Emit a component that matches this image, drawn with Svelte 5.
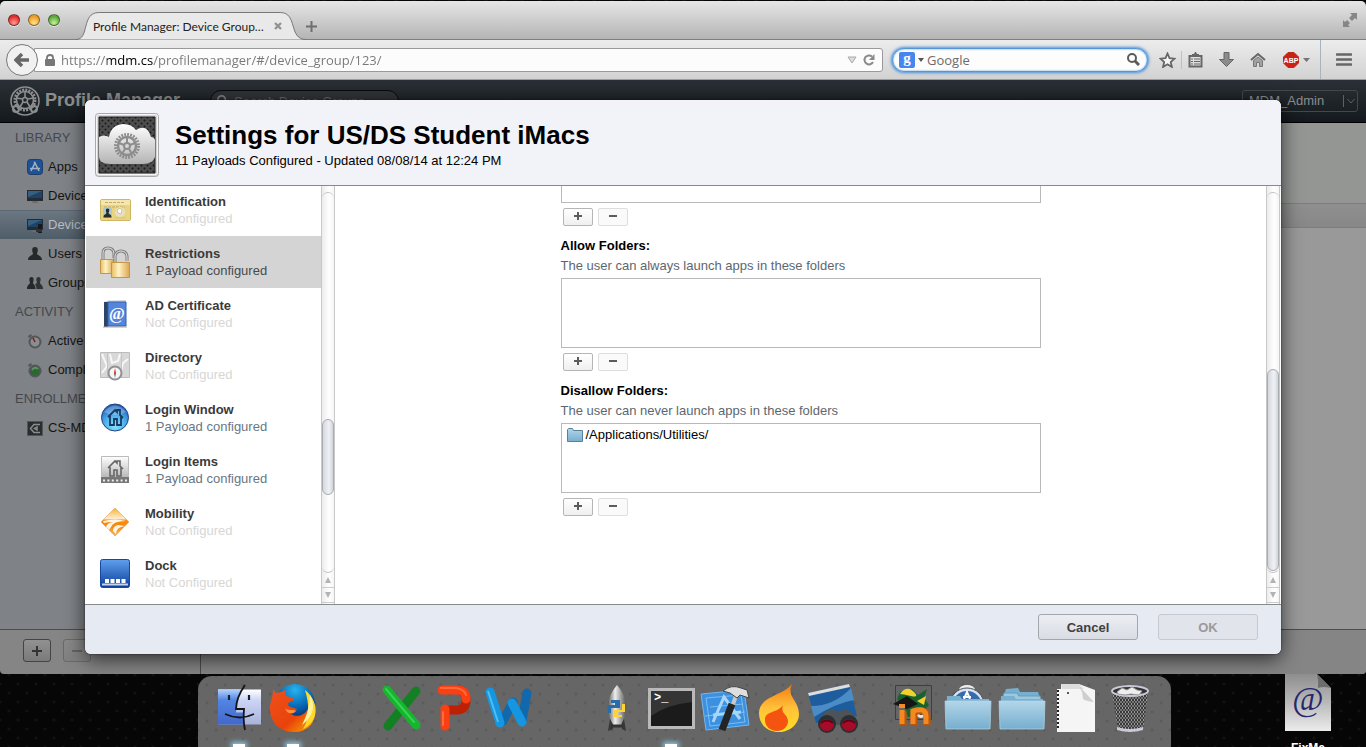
<script>
  const library = [
    { icon: "apps", label: "Apps" },
    { icon: "device", label: "Devices" },
    { icon: "deviceGroup", label: "Device Groups", active: true },
    { icon: "user", label: "Users" },
    { icon: "group", label: "Groups" },
  ];

  const sections = [
    { title: "LIBRARY", items: library },
    {
      title: "ACTIVITY",
      items: [
        { icon: "clock", label: "Active Tasks" },
        { icon: "done", label: "Completed" },
      ],
    },
    { title: "ENROLLMENT", items: [{ icon: "enroll", label: "CS-MDM" }] },
  ];

  const payloads = [
    { icon: "idcard", name: "Identification", count: 0 },
    { icon: "locks", name: "Restrictions", count: 1 },
    { icon: "book", name: "AD Certificate", count: 0 },
    { icon: "map", name: "Directory", count: 0 },
    { icon: "loginWindow", name: "Login Window", count: 1 },
    { icon: "loginItems", name: "Login Items", count: 1 },
    { icon: "mobility", name: "Mobility", count: 0 },
    { icon: "dock", name: "Dock", count: 0 },
  ];

  const folderLists = [
    {
      title: "Allow Folders:",
      hint: "The user can always launch apps in these folders",
      folders: [],
    },
    {
      title: "Disallow Folders:",
      hint: "The user can never launch apps in these folders",
      folders: ["/Applications/Utilities/"],
    },
  ];

  const dockItems = [
    { name: "Finder", running: true },
    { name: "Firefox", running: true },
    { name: "" },
    { name: "Excel" },
    { name: "PowerPoint" },
    { name: "Word" },
    { name: "" },
    { name: "Rocket" },
    { name: "Terminal", running: true },
    { name: "Xcode" },
    { name: "Flame" },
    { name: "Remote Desktop" },
    { name: "divider" },
    { name: "Munki" },
    { name: "Applications" },
    { name: "Folder" },
    { name: "Documents" },
    { name: "Trash" },
  ];

  let selected = $state("Restrictions");
  let url = $state("https://mdm.cs/profilemanager/#/device_group/123/");
</script>

<!-- shared gradients for all icons -->
<svg class="defs" aria-hidden="true">
  <defs>
    <linearGradient id="blue" x2="0" y2="1"><stop stop-color="#5fa0ee" /><stop offset="1" stop-color="#0c3f9c" /></linearGradient>
    <linearGradient id="gold" x2="1" y2="0"><stop stop-color="#e8bd62" /><stop offset=".4" stop-color="#fff3c4" /><stop offset="1" stop-color="#dda550" /></linearGradient>
    <linearGradient id="silver" x2="0" y2="1"><stop stop-color="#fff" /><stop offset="1" stop-color="#b4b4b4" /></linearGradient>
    <linearGradient id="page" x2="0" y2="1"><stop stop-color="#8e8e8e" /><stop offset=".5" stop-color="#b9b9b9" /><stop offset="1" stop-color="#ececec" /></linearGradient>
    <linearGradient id="folder" x2="0" y2="1"><stop stop-color="#b3d5e8" /><stop offset="1" stop-color="#76aecf" /></linearGradient>
    <linearGradient id="orange" x2="0" y2="1"><stop stop-color="#fbb12c" /><stop offset=".4" stop-color="#fff1d8" /><stop offset=".42" stop-color="#f78a0c" /><stop offset=".65" stop-color="#f78a0c" /><stop offset="1" stop-color="#fab765" /></linearGradient>
    <linearGradient id="finderL" x2="0" y2="1"><stop stop-color="#b4d3fa" /><stop offset=".3" stop-color="#5485e2" /><stop offset="1" stop-color="#4268cb" /></linearGradient>
    <linearGradient id="finderR" x2="0" y2="1"><stop stop-color="#fff" /><stop offset=".3" stop-color="#cdd5f6" /><stop offset="1" stop-color="#a9b2da" /></linearGradient>
    <linearGradient id="flame" x2="0" y2="1"><stop stop-color="#f77a10" /><stop offset=".5" stop-color="#ffc13b" /><stop offset="1" stop-color="#ffdf24" /></linearGradient>
    <linearGradient id="fox" x2="1" y2="1"><stop stop-color="#f0501c" /><stop offset=".6" stop-color="#e8430b" /><stop offset="1" stop-color="#ffb400" /></linearGradient>
    <linearGradient id="rocket"><stop stop-color="#555" /><stop offset=".4" stop-color="#eee" /><stop offset="1" stop-color="#555" /></linearGradient>
    <radialGradient id="globe" cy=".15" r=".8"><stop stop-color="#27b3ef" /><stop offset=".5" stop-color="#086cb8" /><stop offset="1" stop-color="#0a1d5c" /></radialGradient>
    <radialGradient id="home" cy=".8" r=".85"><stop stop-color="#8ae6fc" /><stop offset=".5" stop-color="#48a8e8" /><stop offset="1" stop-color="#1848a8" /></radialGradient>
    <pattern id="mesh" width="3" height="4" patternUnits="userSpaceOnUse"><rect width="3" height="4" fill="#a0a0a0" /><path d="M0 0l3 4M3 0L0 4" stroke="#2a2a2a" /></pattern>
    <pattern id="holes" width="6" height="6" patternUnits="userSpaceOnUse"><rect width="6" height="6" fill="#4c4c4c" /><circle cx="1.5" cy="1.5" r="1" fill="#191919" /><circle cx="4.5" cy="4.5" r="1" fill="#191919" /></pattern>
  </defs>
</svg>

{#snippet sideIcon(name)}
  <svg class="side-icon" viewBox="0 0 16 16" aria-hidden="true">
    {#if name === "apps"}
      <rect x=".5" y=".5" width="15" height="15" rx="3" fill="#1d5296" stroke="#203e66" />
      <path d="M4 12L8 4l4 8M3 9.500h10M7 4l1-1" fill="none" stroke="#a6b1bf" stroke-width="1.500" />
    {:else if name === "device" || name === "deviceGroup"}
      <rect y="2" width="16" height="11" fill="#262b30" />
      <path d="M1 3h14v7H1z" fill="#1d4468" />
      <path d="M1 3h14L1 9z" fill="#375f82" />
      <path d="M6 13h4l1 2H5z" fill="#686c70" />
      {#if name === "deviceGroup"}
        <path d="M11 7h4v9h-4z" fill="#171a1d" /><path d="M9 12h6v3H9z" fill="#2e3236" />
      {/if}
    {:else if name === "user"}
      <path d="M8 1c3 0 3.500 3 2 6.500 0 2 5 2 5 6.500H1c0-4.500 5-4.500 5-6.500C4.500 4 5 1 8 1z" fill="#262829" />
    {:else if name === "group"}
      <path d="M4.500 2C7 2 7 5 6 7.500c0 2 2.500 2 2.500 6.500H0c0-4.500 3-4.500 3-6.500C2 5 2 2 4.500 2z" fill="#262829" />
      <path d="M11.500 2C14 2 14 5 13 7.500c0 2 3 2 3 6.500H9.500c0-4-2-4-1-5s1.500-1 1.500-1.500C9 5 9 2 11.500 2z" fill="#303233" />
    {:else if name === "clock" || name === "done"}
      <circle cx="8" cy="9" r="5.500" fill={name === "done" ? "#2d6630" : "#8a8c8e"} stroke="#53575b" stroke-width="2" />
      <path d="M1 3l3-2 1 2-3 2z" fill="#53575b" />
      {#if name === "clock"}
        <path d="M8 9L6 5" stroke="#7b2020" stroke-width="1.500" />
      {:else}
        <path d="M5 8q3-4 6-1" fill="none" stroke="#5f9464" stroke-width="2" />
      {/if}
    {:else}
      <rect x=".5" y="1.500" width="15" height="14" fill="#2a2c2d" stroke="#535657" />
      <path d="M13 4.500H7L3.500 8.500 7 12.500h6M7.500 8.500L10 7v3z" fill="none" stroke="#8b8d8e" stroke-width="1.500" />
    {/if}
  </svg>
{/snippet}

{#snippet payloadIcon(name)}
  <svg class="payload-icon" viewBox="0 0 30 30" aria-hidden="true">
    {#if name === "idcard"}
      <rect x=".5" y="4.500" width="30" height="21" rx="1.500" fill="#e9d480" stroke="#cdb765" />
      <path d="M1 5h29v5H1z" fill="#f3e7af" /><path d="M5 7.500h20M4 12h21" stroke="#c7a86d" stroke-dasharray="3 1" />
      <path d="M3 13h9v10H3z" fill="#a8cbd7" /><path d="M7.500 13.500c3 0 1.500 3 1 4.500 1 2 3 1 3 4.500H3.500c0-3.500 2-2.500 3-4.500-.5-1.500-1.500-4.500 1-4.500z" fill="#302a20" />
      <circle cx="20" cy="17" r="5" fill="#e4e0cc" /><path d="M17 15l3-2 2 2-1 4-3-1zM14 23h12" fill="#fff" stroke="#d9c279" />
    {:else if name === "locks"}
      <path d="M3 13V6q0-5 5-5t6 5v5" fill="none" stroke="#7d7d7d" stroke-width="3" />
      <path d="M3 13V6q0-5 5-5t6 5v5" fill="none" stroke="#e6e6e6" />
      <path d="M.5 12.500h13v14H.5z" fill="url(#gold)" stroke="#c0954c" />
      <path d="M15 16V9q1-5 6-5t6 5v5" fill="none" stroke="#7d7d7d" stroke-width="3" />
      <path d="M15 16V9q1-5 6-5t6 5v5" fill="none" stroke="#e6e6e6" />
      <path d="M11.500 15.500h18v15h-18z" fill="url(#gold)" stroke="#c0954c" />
    {:else if name === "book"}
      <path d="M4 3l4-1.500 18-.5v26l-4 1H4z" fill="#ced4d9" />
      <path d="M4 3h4v25H4z" fill="#2b4468" /><path d="M8 3h18v24H8z" fill="#5585dc" stroke="#3560ad" />
      <path d="M3 28h24" stroke="#aaa" />
      <text x="17" y="20" class="at-small">@</text>
    {:else if name === "map"}
      <path d="M.5 1.500h29v25H.5z" fill="#d7d7d7" stroke="#bcbcbc" />
      <path d="M2 3l5 12-5 7M10 3l2 9 6-2 2-7M20 24l3-12 5-4" fill="none" stroke="#f7f7f7" stroke-width="2" />
      <path d="M7.500 2v24M21.500 2v24" stroke="#c4c4c4" />
      <circle cx="15" cy="22" r="6.500" fill="#f6f6f6" stroke="#8e9296" stroke-width="2" /><path d="M14 22l1-5 1 5z" fill="#e13424" /><path d="M14 22l1 5 1-5z" fill="#53626f" />
    {:else if name === "loginWindow"}
      <circle cx="15" cy="14.500" r="13.500" fill="url(#home)" stroke="#214284" />
      <path d="M4 9Q15-4 26 9 15 15 4 9z" fill="#fff" opacity=".25" />
      <path d="M8 14l7-7 2 2V7h3v5l3 3M10 13v9h4v-6h3v6h4v-9" fill="none" stroke="#173b65" stroke-width="1.800" />
    {:else if name === "loginItems"}
      <path d="M1.500 1.500h27v22h-27z" fill="url(#silver)" stroke="#bbb" /><path d="M1 22h28v6H1z" fill="#777" />
      <path d="M3 25.500h24" stroke="#eee" stroke-width="2" stroke-dasharray="2 2.400" />
      <path d="M8 13l7-7 2 2V6h3v5l3 3M10 12v9h4v-6h3v6h4v-9" fill="none" stroke="#666" stroke-width="1.600" />
    {:else if name === "mobility"}
      <path d="M15 1l14 14-14 14L1 15z" fill="url(#orange)" stroke="#dfaa68" stroke-width=".7" />
      <path d="M3 14q12-3 23 0-13 0-15 6l-2 3-3-3q1-4 7-5-6 0-9 1zM25 19q-9 1-9 8l-3-3q0-5 5-6z" fill="#fff" opacity=".9" />
    {:else}
      <rect x=".5" y=".5" width="29" height="28" rx="2" fill="url(#blue)" stroke="#1846a0" />
      <path d="M5 20h4v4H5zm5.500 0h4v4h-4zm5.500 0h4v4h-4zm5.500 0h4v4h-4z" fill="#fff" /><path d="M2 25.500h26" stroke="#c4d5f4" stroke-width="2" />
    {/if}
  </svg>
{/snippet}

{#snippet dockIcon(name)}
  <svg viewBox="0 0 48 48" aria-hidden="true">
    {#if name === "Finder"}
      <path d="M3 5.500h43v35H3z" fill="url(#finderR)" /><path d="M3 5.500h24q-5 11-6 23h7l1 12H3z" fill="url(#finderL)" />
      <path d="M14 11v5M34 11v5" stroke="#15213c" stroke-width="2.200" />
      <path d="M30 1q-9 13-9 24h8q-1 12 1 21M10 30q15 7 29 0" fill="none" stroke="#151515" stroke-width="1.800" />
    {:else if name === "Firefox"}
      <circle cx="26" cy="20" r="20" fill="url(#globe)" />
      <path d="M36 6c16 13 14 42-11 42C9 48 0 36 1 22c1-6 3-9 3-17l3 4c4-1 6-1 9-3l1 6c3 1 6 0 8 4-3 2-5 1-6 4 1 4 5 3 9 5-1 3-5 4-7 4 6 6 17 2 19-7 1-6-1-11-4-16z" fill="url(#fox)" />
      <path d="M36 6c15 12 14 32-2 39 6-9 7-23 2-39z" fill="#ffd82b" />
      <path d="M41 11c7 13 1 23-8 30 4-8 7-15 8-30z" fill="#fff2a0" />
      <path d="M16 24c3 3 8 1 11 3-2 3-6 3-9 1z" fill="#ff8f3d" />
    {:else if name === "Excel"}
      <path d="M39 7L11 42" stroke="#138024" stroke-width="9" stroke-linecap="round" /><path d="M10 6l29 35" stroke="#15b530" stroke-width="9" stroke-linecap="round" /><path d="M9 5l28 33" stroke="#38d44d" stroke-width="2" stroke-linecap="round" />
    {:else if name === "PowerPoint"}
      <path d="M13 26h14q8-1 8-10t-8-10" fill="none" stroke="#bd2004" stroke-width="9" stroke-linejoin="round" /><path d="M11 6h15q9 0 9 9M14 42V25" fill="none" stroke="#fa4012" stroke-width="9" stroke-linecap="round" /><path d="M10 4h15q8 1 10 7M12 28v13" fill="none" stroke="#ff6a3c" stroke-width="2" stroke-linecap="round" />
    {:else if name === "Word"}
      <path d="M18 37L28 18M37 37L42 9" stroke="#1268ac" stroke-width="9" stroke-linecap="round" /><path d="M5 8l10 31M27 19l10 19" stroke="#1596e0" stroke-width="9" stroke-linecap="round" /><path d="M3 7l10 31" stroke="#51bcf2" stroke-width="2" />
    {:else if name === "Rocket"}
      <path d="M17 35l-2 12 5-2v-7h9v7l4 2-2-12z" fill="#373737" /><path d="M24 1q17 20 3 41h-6Q7 21 24 1z" fill="url(#rocket)" /><path d="M18 42h12" stroke="#333" stroke-width="3" />
      <path d="M18 16h9v8h-9v5h-3v-8h7v-2h-4z" fill="#286daa" /><path d="M29 20h3v8h-7v3h4v2h-9v-7h9z" fill="#ffd335" />
    {:else if name === "Terminal"}
      <path d="M2.500 5.500h44v38h-44z" fill="#1b1b1b" stroke="#b9b9b9" stroke-width="3" /><path d="M4 32Q22 20 45 18V7H4z" fill="#353535" /><text x="7" y="17" class="prompt">&gt;_</text>
    {:else if name === "Xcode"}
      <path d="M0 10l43-4 5 35-43 5z" fill="#3b91e0" stroke="#73b7ee" /><path d="M5 14l35-3 4 27-35 4zM4 32l40-4M9 23l33-3" fill="none" stroke="#8fc7f1" stroke-width=".8" />
      <path d="M12 38l11-25 16 22M12 31l28-3" fill="none" stroke="#a7d6f8" stroke-width="3" /><path d="M36 9L31 23" stroke="#c8c8c8" stroke-width="4" /><path d="M31 20L21 46" stroke="#242424" stroke-width="7" /><path d="M22 7q8-7 18-3l6 2 2 8-9-3-3 3-7-5z" fill="#dedede" stroke="#444" />
    {:else if name === "Flame"}
      <path d="M37 0c-6 13 7 16 7 30 0 10-9 18-20 18S4 41 4 29C4 12 28 12 37 0z" fill="url(#flame)" /><path d="M28 21c-3 9 5 9 5 16 0 6-5 10-11 10S10 43 10 36c0-10 12-6 18-15z" fill="#f55410" />
    {:else if name === "Remote Desktop"}
      <path d="M-1 9L40 0l8 32-41 7z" fill="#1e5d9d" /><path d="M-1 9L40 0l1 3L0 12z" fill="#ddd" /><path d="M2 22Q25 22 42 4l3 12Q27 19 5 33z" fill="#4b8cc7" />
      <path d="M15 28l8-3 6 3 7-3 8 4 5 12H10z" fill="#4d5357" /><circle cx="18" cy="40" r="9" fill="#2b2f31" /><circle cx="40" cy="40" r="9" fill="#2b2f31" /><ellipse cx="18" cy="41" rx="7" ry="6" fill="#a80b27" /><ellipse cx="40" cy="41" rx="7" ry="6" fill="#a80b27" /><path d="M12 39q6-5 12 0M34 39q6-5 12 0" fill="none" stroke="#5a0617" stroke-width="2" />
    {:else if name === "Munki"}
      <path d="M5.500 1.500h36v34h-36z" fill="#656565" stroke="#7c2424" /><path d="M10 8l12-3 6 6 9-6-3 9 5 7-9 10-12 2-4-11-7-7z" fill="#18622c" /><path d="M10 10q7-10 15-1 4 5-4 3t-11-2M27 17l9-5-2 9z" fill="#f1d12a" /><path d="M3 20l14-8 11 8-11 5z" fill="#161616" /><circle cx="31" cy="29" r="5" fill="#e6e6e6" /><circle cx="31" cy="29" r="2" fill="#222" />
      <path d="M13 27v14M24 41V28q13-4 13 5v8" fill="none" stroke="#c15405" stroke-width="7" /><path d="M12 26v14M23 40V27q13-4 13 5v8" fill="none" stroke="#f38a21" stroke-width="5" /><path d="M9 20h6v4H9z" fill="#f38a21" />
    {:else if name === "Applications" || name === "Folder"}
      {#if name === "Applications"}
        <ellipse cx="23" cy="6" rx="8" ry="5" fill="#eee" /><circle cx="23" cy="21" r="17" fill="#dae3ef" stroke="#49525c" /><circle cx="23" cy="22" r="15" fill="#356dac" /><path d="M20 15l3-7 3 7M19 13h8" fill="none" stroke="#fff" stroke-width="2" />
      {:else}
        <path d="M8 5l12-1 2 4h18l3 9H4z" fill="#76afd0" /><path d="M6 9h13l2 3h21l2 7H3z" fill="#9ac8df" stroke="#649dbd" />
      {/if}
      <path d="M3 12h13l2 3h27v29H2z" fill="#78b0cf" /><path d="M1 17h46l-1 28H2z" fill="url(#folder)" stroke="#b5d9ea" stroke-width=".7" />
    {:else if name === "Documents"}
      <path d="M9 0h18l16 6v42H5V5h4z" fill="#f5f5f5" /><path d="M9 0h18l5 5H10z" fill="#ddd" /><path d="M27 2l15 16q-9-1-11-3l-1-7z" fill="#cfcfcf" /><path d="M6 6v40" stroke="#222" stroke-width="2" stroke-dasharray="2 2" /><circle cx="16" cy="9" r="1" fill="#222" />
    {:else}
      <path d="M6 8h36l-5 38q-13 4-25 0z" fill="url(#mesh)" /><path d="M11 43q13 4 26 0v3q-13 4-26 0z" fill="#c9c9da" /><ellipse cx="24" cy="7" rx="18" ry="5" fill="#333" stroke="#c9c9d8" stroke-width="2" /><path d="M11 8l5-4 5 2 5-3 5 3 5 1-3 4-8-1-6 1-7-1z" fill="#eee" stroke="#999" />
    {/if}
  </svg>
{/snippet}

{#snippet scrollbar(before, thumb, after)}
  <div class="scrollbar">
    <div class="track">
      <div style="flex-grow: {before}"></div>
      <div class="thumb" style="flex-grow: {thumb}"></div>
      <div style="flex-grow: {after}"></div>
    </div>
    <button aria-label="Scroll up"><svg viewBox="0 0 8 8"><path d="M4 1l3 6H1z" /></svg></button>
    <button aria-label="Scroll down"><svg viewBox="0 0 8 8"><path d="M4 7l3-6H1z" /></svg></button>
  </div>
{/snippet}

{#snippet plusMinus()}
  <div class="plus-minus">
    <button aria-label="Add folder"><svg viewBox="0 0 10 10"><path d="M5 1v8M1 5h8" /></svg></button>
    <button aria-label="Remove folder" disabled><svg viewBox="0 0 10 10"><path d="M1 5h8" /></svg></button>
  </div>
{/snippet}

<div class="desktop">
  <div class="browser">
    <header class="tabstrip">
      <div class="lights">
        <button class="red" aria-label="Close window"></button>
        <button class="yellow" aria-label="Minimize window"></button>
        <button class="green" aria-label="Zoom window"></button>
      </div>
      <div class="tab">
        <svg class="tab-shape" viewBox="0 0 232 28" preserveAspectRatio="none" aria-hidden="true">
          <path d="M0 27.500C14 27.500 5 .5 23 .5H206C224 .5 214 27.500 232 27.500" />
        </svg>
        <span>Profile Manager: Device Group…</span>
        <button aria-label="Close tab"><svg width="10" height="10" viewBox="0 0 10 10"><path d="M2 2l6 6M8 2L2 8" stroke="#929292" stroke-width="2.400" /></svg></button>
      </div>
      <button class="new-tab" aria-label="New tab"><svg width="11" height="11" viewBox="0 0 11 11"><path d="M5.500 0v11M0 5.500h11" stroke="#6f6f6f" stroke-width="2" /></svg></button>
      <button class="fullscreen" aria-label="Full screen"><svg width="16" height="16" viewBox="0 0 16 16"><path d="M8 1h7v7l-2-2-3 3-3-3 3-3zM1 8l2 2 2-2 3 3-2 2 2 2H1z" fill="#868686" /></svg></button>
    </header>

    <nav class="navbar">
      <button class="back" aria-label="Back"><svg width="16" height="14" viewBox="0 0 16 14"><path d="M8 1L2 7l6 6M2 7h13" fill="none" stroke="#676767" stroke-width="3.500" /></svg></button>
      <div class="urlbar">
        <svg width="10" height="12" viewBox="0 0 10 12" aria-hidden="true"><path d="M2 6V3.500Q2 1 5 1t3 2.500V6" fill="none" stroke="#777" stroke-width="1.800" /><rect y="5" width="10" height="7" rx="1" fill="#777" /></svg>
        <input type="text" aria-label="Address" bind:value={url} />
        <button aria-label="History"><svg width="10" height="8" viewBox="0 0 10 8"><path d="M1 1h8L5 7z" fill="#ddd" stroke="#aaa" /></svg></button>
        <button aria-label="Reload"><svg width="12" height="12" viewBox="0 0 12 12"><path d="M9 2.500A4.500 4.500 0 1 0 10 8" fill="none" stroke="#8a8a8a" stroke-width="2" /><path d="M11.500 0v6H6z" fill="#8a8a8a" /></svg></button>
      </div>
      <div class="search">
        <span class="g">g</span>
        <svg width="6" height="4" viewBox="0 0 6 4" aria-hidden="true"><path d="M0 0h6L3 4z" fill="#555" /></svg>
        <input type="search" aria-label="Web search" placeholder="Google" />
        <svg width="13" height="13" viewBox="0 0 13 13" aria-hidden="true"><circle cx="5" cy="5" r="4" fill="none" stroke="#5b5b5b" stroke-width="2" /><path d="M8 8l4 4" stroke="#5b5b5b" stroke-width="3" /></svg>
      </div>
      <button class="tool star" aria-label="Bookmark"><svg width="17" height="16" viewBox="0 0 17 16"><path d="M8.500 1.500l2 4.700 5 .5-3.800 3.300 1.200 5-4.400-2.700L4 15l1.200-5-3.700-3.300 5-.5z" fill="#f5f5f5" stroke="#666" stroke-width="1.800" /></svg></button>
      <button class="tool clip" aria-label="Bookmarks menu"><svg width="15" height="16" viewBox="0 0 15 16"><path d="M1.500 4h12v10.500h-12z" fill="none" stroke="#666" stroke-width="2" /><path d="M4 4V2h2l1-2h1l1 2h2v2z" fill="#666" /><path d="M3 7h2m1 0h6M3 9.500h2m1 0h6M3 12h2m1 0h6" stroke="#666" stroke-width="1.200" /></svg></button>
      <button class="tool down" aria-label="Downloads"><svg width="15" height="15" viewBox="0 0 15 15"><path d="M5 .5h5v7h4.500L7.500 14.500.5 7.500H5z" fill="#8b8b8b" stroke="#656565" /></svg></button>
      <button class="tool home" aria-label="Home"><svg width="16" height="15" viewBox="0 0 16 15"><path d="M1 8l7-6 7 6" fill="none" stroke="#666" stroke-width="2" /><path d="M3.500 8.500L8 5l4.500 3.500v6h-3v-4h-3v4h-3z" fill="#a2a2a2" stroke="#777" /></svg></button>
      <button class="tool abp" aria-label="Adblock Plus">
        <svg width="16" height="16" viewBox="0 0 16 16"><path d="M5 .5h6L15.500 5v6L11 15.500H5L.5 11V5z" fill="#cf2014" stroke="#b32c1f" /><text x="8" y="11">ABP</text></svg>
        <svg width="7" height="4" viewBox="0 0 7 4"><path d="M0 0h7L3.500 4z" fill="#747474" /></svg>
      </button>
      <button class="tool menu" aria-label="Menu"><svg width="16" height="13" viewBox="0 0 16 13"><path d="M1 1.500h14M1 6.500h14M1 11.500h14" stroke="#666" stroke-width="2.600" stroke-linecap="round" /></svg></button>
    </nav>

    <div class="app">
      <header class="topbar">
        <svg width="32" height="32" viewBox="0 0 32 32" aria-hidden="true">
          <g fill="none" stroke="#8b8d8e">
            <circle cx="16" cy="16" r="14" stroke-width="1.600" />
            <circle cx="16" cy="15" r="10" stroke-width="3" stroke-dasharray="2 1.140" />
            <circle cx="16" cy="15" r="8.500" stroke-width="1.600" />
            <circle cx="16" cy="15" r="2.500" stroke-width="1.500" />
            <path d="M16 7v5M8 13l5 1M24 13l-5 1M11 22l3-5M21 22l-3-5" stroke-width="1.600" />
            <circle cx="7" cy="24" r="3" stroke-width="2" /><circle cx="25" cy="24" r="3" stroke-width="2" />
          </g>
        </svg>
        <h1>Profile Manager</h1>
        <label class="app-search">
          <svg width="12" height="12" viewBox="0 0 13 13" aria-hidden="true"><circle cx="5" cy="5" r="4" fill="none" stroke="#7b7d7e" stroke-width="2" /><path d="M8 8l4 4" stroke="#7b7d7e" stroke-width="2" /></svg>
          <input type="search" aria-label="Search Device Groups" placeholder="Search Device Groups" />
        </label>
        <button class="account">
          <span>MDM_Admin</span>
          <svg width="14" height="12" viewBox="0 0 14 12" aria-hidden="true"><path d="M.5 0v12M4.500 4L8 8l3.500-4" fill="none" stroke="#5e6264" /></svg>
        </button>
      </header>

      <div class="workspace">
        <aside>
          <div class="sections">
            {#each sections as section}
              <h2>{section.title}</h2>
              {#each section.items as item}
                <a href="#{item.icon}" class:active={item.active}>
                  {@render sideIcon(item.icon)}
                  {item.label}
                </a>
              {/each}
            {/each}
          </div>
          <div class="side-footer">
            <button aria-label="Add group"><svg width="12" height="12" viewBox="0 0 12 12"><path d="M6 1v10M1 6h10" /></svg></button>
            <button aria-label="Remove group" disabled><svg width="12" height="12" viewBox="0 0 12 12"><path d="M1 6h10" /></svg></button>
          </div>
        </aside>
        <main>
          <div class="summary"></div>
          <div class="columns"></div>
          <div class="rows"></div>
          <div class="main-footer"></div>
        </main>
      </div>

      <div class="modal" role="dialog" aria-labelledby="settings-title">
        <header>
          <svg width="64" height="64" viewBox="0 0 64 64" aria-hidden="true">
            <rect x=".5" y=".5" width="63" height="63" rx="3" fill="#d5d5d5" stroke="#aaa" />
            <rect x="1.500" y="1.500" width="61" height="60" rx="2" fill="none" stroke="#f6f6f6" />
            <path d="M4 4h56v56H4z" fill="url(#holes)" stroke="#222" />
            <path d="M4 24q5-3 10 0 2-12 14-13 9 0 13 6 11-7 15 7 3 0 4 3v17q-2 7-12 7H15Q4 51 4 44z" fill="url(#silver)" />
            <circle cx="32" cy="33" r="11.500" fill="none" stroke="#8d8d8d" stroke-width="3" stroke-dasharray="1.800 1.200" />
            <circle cx="32" cy="33" r="9" fill="none" stroke="#8d8d8d" stroke-width="2.500" />
            <circle cx="32" cy="33" r="3" fill="none" stroke="#8d8d8d" stroke-width="2" />
            <path d="M32 24v6M24 30l5 2M40 30l-5 2M27 41l3-5M37 41l-3-5" stroke="#8d8d8d" stroke-width="2" />
          </svg>
          <div>
            <h2 id="settings-title">Settings for US/DS Student iMacs</h2>
            <p>11 Payloads Configured - Updated 08/08/14 at 12:24 PM</p>
          </div>
        </header>

        <div class="modal-body">
          <div class="payloads">
            {#each payloads as payload}
              <button
                class="payload"
                class:selected={selected === payload.name}
                onclick={() => (selected = payload.name)}
              >
                {@render payloadIcon(payload.icon)}
                <span class="payload-text">
                  <strong>{payload.name}</strong>
                  {#if payload.count > 0}
                    <span class="count">{payload.count} Payload configured</span>
                  {:else}
                    <span class="none">Not Configured</span>
                  {/if}
                </span>
              </button>
            {/each}
          </div>
          {@render scrollbar(228, 75, 78)}

          <div class="form">
            <div class="fields">
              <div class="box clipped"></div>
              {@render plusMinus()}
              {#each folderLists as list}
                <h3>{list.title}</h3>
                <p>{list.hint}</p>
                <ul class="box">
                  {#each list.folders as folder}
                    <li>
                      <svg width="16" height="15" viewBox="0 0 16 15" aria-hidden="true"><path d="M.5 3V1.500l1-1h4l1 2h9v11H.5z" fill="url(#folder)" stroke="#5a8199" /></svg>
                      {folder}
                    </li>
                  {/each}
                </ul>
                {@render plusMinus()}
              {/each}
            </div>
          </div>
          {@render scrollbar(178, 202, 1)}
        </div>

        <footer>
          <button>Cancel</button>
          <button disabled>OK</button>
        </footer>
      </div>
    </div>
  </div>

  <div class="shelf">
    <div class="dock">
      {#each dockItems as item}
        {#if item.name === "divider"}
          <div class="dock-divider"></div>
        {:else if item.name === ""}
          <div class="dock-item"></div>
        {:else}
          <button class="dock-item" class:running={item.running} aria-label={item.name}>
            {@render dockIcon(item.name)}
          </button>
        {/if}
      {/each}
    </div>
    <a class="desktop-file" href="#fixme">
      <svg width="46" height="57" viewBox="0 0 46 57" aria-hidden="true">
        <path d="M0 0h32l14 14v43H0z" fill="url(#page)" />
        <path d="M32 0l14 14q-8-2-13 0 1-7-1-14z" fill="#6c6c6c" />
        <text x="23" y="36">@</text>
      </svg>
      <span>FixMe</span>
    </a>
  </div>
</div>

<style>
  :global(body) {
    margin: 0;
    overflow: hidden;
  }

  * {
    box-sizing: border-box;
  }

  h1, h2, h3, p, ul {
    margin: 0;
    padding: 0;
    font-weight: normal;
  }

  button, input {
    font: inherit;
    margin: 0;
    padding: 0;
    border: 0;
    background: none;
  }

  input {
    outline: none;
    min-width: 0;
  }

  svg {
    display: block;
    flex-shrink: 0;
  }

  .defs {
    position: absolute;
    width: 0;
    height: 0;
  }

  .desktop {
    height: 100vh;
    display: flex;
    flex-direction: column;
    padding-top: 1px;
    overflow: hidden;
    font-family: "Liberation Sans", Arial, sans-serif;
    font-size: 13px;
    background-color: #060606;
    background-image: radial-gradient(circle, #121212 1px, transparent 2px), radial-gradient(circle, #121212 1px, transparent 2px);
    background-size: 18px 18px;
    background-position: 0 0, 9px 9px;
  }

  .browser {
    flex: 1;
    min-height: 0;
    display: flex;
    flex-direction: column;
    border-radius: 5px 5px 4px 4px;
    overflow: hidden;
  }

  /* Tab strip */
  .tabstrip {
    height: 39px;
    flex-shrink: 0;
    display: flex;
    align-items: flex-end;
    padding: 0 8px;
    font-family: Lato, "Open Sans", sans-serif;
    font-size: 12px;
    background: linear-gradient(#e6e6e6, #b4b4b4);
    border-bottom: 1px solid #7e7e7e;
  }

  .lights {
    display: flex;
    gap: 8px;
    width: 68px;
    align-self: center;
  }

  .lights button {
    width: 12px;
    height: 12px;
    border-radius: 50%;
    border: 1px solid #0006;
    box-shadow: 0 1px 0 #fff8;
  }

  .red { background: radial-gradient(circle at 50% 80%, #ff9b93, #df2d2d 70%); }
  .yellow { background: radial-gradient(circle at 50% 80%, #ffe48b, #e99b26 70%); }
  .green { background: radial-gradient(circle at 50% 80%, #c8f197, #5aa63b 70%); }

  .tab {
    position: relative;
    display: flex;
    align-items: center;
    justify-content: space-between;
    width: 230px;
    height: 28px;
    margin-bottom: -1px;
    padding: 0 23px 0 17px;
    color: #222;
    white-space: nowrap;
  }

  .tab-shape {
    position: absolute;
    inset: 0;
    width: 100%;
    height: 100%;
    fill: #e9e9e9;
    stroke: #777;
  }

  .tab span, .tab button {
    position: relative;
  }

  .new-tab {
    margin: 0 auto 7px 0;
  }

  .fullscreen {
    align-self: center;
  }

  /* Navigation bar */
  .navbar {
    height: 40px;
    flex-shrink: 0;
    display: flex;
    align-items: center;
    padding-left: 6px;
    font-family: "Open Sans", sans-serif;
    background: linear-gradient(#ececec, #d2d2d2);
    border-bottom: 1px solid #9c9c9c;
  }

  .back {
    position: relative;
    width: 32px;
    height: 32px;
    display: grid;
    place-items: center;
    border: 1px solid #777;
    border-radius: 50%;
    background: #f1f1f1;
  }

  .urlbar {
    flex: 1;
    height: 24px;
    display: flex;
    align-items: center;
    gap: 6px;
    margin-left: -4px;
    padding: 0 7px 0 10px;
    border: 1px solid #999;
    border-radius: 0 3px 3px 0;
    background: #fcfcfc;
  }

  /* the host name is darker than the rest of the address */
  .urlbar input {
    flex: 1;
    color: transparent;
    background: linear-gradient(90deg, #777 46px, #000 46px, #000 92px, #777 92px);
    -webkit-background-clip: text;
    background-clip: text;
  }

  .search {
    width: 256px;
    height: 24px;
    display: flex;
    align-items: center;
    gap: 3px;
    margin-left: 9px;
    padding: 0 7px 0 6px;
    border: 1px solid #5595d6;
    border-radius: 12px;
    background: #fdfdfd;
    box-shadow: 0 0 3px 1px #4991dc, inset 0 0 2px #4991dc;
  }

  .search input {
    flex: 1;
  }

  .search input::placeholder {
    color: #6b6b6b;
    opacity: 1;
  }

  .g {
    width: 16px;
    height: 16px;
    border-radius: 2px;
    background: #4686ef;
    color: #fff;
    font: bold 15px/12px "Liberation Serif", serif;
    text-align: center;
  }

  .tool {
    height: 39px;
    display: flex;
    align-items: center;
    justify-content: center;
    gap: 4px;
  }

  .star { width: 28px; margin-left: 5px; }
  .clip { width: 28px; border-left: 1px solid #c0c0c0; height: 18px; }
  .down { width: 34px; }
  .home { width: 30px; }
  .abp { width: 47px; }
  .menu { width: 46px; border-left: 1px solid #a9b3bd; }

  .abp text {
    font: bold 7px "Liberation Sans", sans-serif;
    fill: #fff;
    text-anchor: middle;
  }

  /* Profile Manager, dimmed behind the dialog */
  .app {
    position: relative;
    flex: 1;
    min-height: 0;
    display: flex;
    flex-direction: column;
    overflow: hidden;
  }

  .topbar {
    height: 43px;
    flex-shrink: 0;
    display: flex;
    align-items: center;
    padding: 0 8px 0 9px;
    background: linear-gradient(#2a3035, #14191d);
    border-bottom: 1px solid #000;
    color: #8b8d8e;
  }

  .topbar h1 {
    width: 165px;
    margin-left: 4px;
    padding-bottom: 2px;
    font-size: 18px;
    line-height: 22px;
    font-weight: bold;
    white-space: nowrap;
  }

  .app-search {
    width: 189px;
    height: 22px;
    display: flex;
    align-items: center;
    gap: 5px;
    padding: 0 6px;
    border: 1px solid #080b0d;
    border-radius: 11px;
    background: #303335;
  }

  .app-search input {
    flex: 1;
  }

  .app-search input::placeholder {
    color: #62666a;
    opacity: 1;
  }

  .account {
    width: 116px;
    height: 22px;
    display: flex;
    align-items: center;
    justify-content: space-between;
    margin-left: auto;
    padding: 0 0 1px 6px;
    border: 1px solid #43484b;
    border-radius: 3px;
    color: #8b8d8e;
  }

  .workspace {
    flex: 1;
    min-height: 0;
    display: flex;
  }

  aside {
    width: 201px;
    display: flex;
    flex-direction: column;
    border-right: 1px solid #4c4c4c;
  }

  .sections {
    flex: 1;
    background: #7f8286;
  }

  .sections h2 {
    padding-left: 15px;
    font-size: 13px;
    line-height: 29px;
    color: #44484c;
  }

  .sections a {
    height: 29px;
    display: flex;
    align-items: center;
    gap: 5px;
    padding-left: 27px;
    color: #151515;
    text-decoration: none;
  }

  .sections a.active {
    color: #b9bdc1;
    background: linear-gradient(#6c7882, #4f5d69);
    box-shadow: inset 0 1px 0 #5c6974;
  }

  .side-icon {
    width: 16px;
    height: 16px;
  }

  .side-footer {
    height: 45px;
    display: flex;
    align-items: center;
    gap: 12px;
    padding: 0 23px 3px;
    background: #858585;
    border-top: 1px solid #4c4c4c;
  }

  .side-footer button {
    width: 28px;
    height: 23px;
    display: grid;
    place-items: center;
    border: 1px solid #444;
    border-radius: 3px;
    background: linear-gradient(#919191, #7a7a7a);
  }

  .side-footer path {
    stroke: #333;
    stroke-width: 2;
  }

  .side-footer button:disabled {
    opacity: 0.4;
  }

  main {
    flex: 1;
    display: flex;
    flex-direction: column;
    background: #999;
  }

  .summary {
    height: 80px;
    background: #949694;
  }

  .columns {
    height: 25px;
    border: 1px solid #7d7d7d;
    border-width: 1px 0;
    background: linear-gradient(#8f8f8f, #878787);
  }

  .rows {
    flex: 1;
  }

  .main-footer {
    height: 45px;
    background: #858585;
    border-top: 1px solid #4c4c4c;
  }

  /* Settings dialog */
  .modal {
    position: absolute;
    inset: 20px 85px;
    display: flex;
    flex-direction: column;
    border-radius: 6px;
    overflow: hidden;
    background: #fff;
    box-shadow: 0 5px 20px #000a, 0 0 2px #000a;
  }

  .modal header {
    height: 86px;
    flex-shrink: 0;
    display: flex;
    gap: 16px;
    padding: 13px 10px 0;
    background: #f2f3f8;
    border-bottom: 1px solid #8a8a8a;
  }

  .modal header h2 {
    margin-top: 6px;
    font-size: 26px;
    line-height: 32px;
    font-weight: bold;
  }

  .modal header p {
    line-height: 20px;
  }

  .modal-body {
    flex: 1;
    min-height: 0;
    display: flex;
    padding: 0 1px;
  }

  .payloads {
    width: 235px;
    overflow: hidden;
    margin-top: -2px;
  }

  .payload {
    width: 100%;
    height: 52px;
    display: flex;
    align-items: center;
    gap: 15px;
    padding-left: 14px;
    line-height: 17px;
    text-align: left;
  }

  .payload.selected {
    background: #d4d4d4;
  }

  .payload-icon {
    width: 30px;
    height: 30px;
    overflow: visible;
  }

  .payload-text {
    display: flex;
    flex-direction: column;
  }

  .payload strong {
    color: #3a3a3a;
  }

  .count {
    color: #6a7682;
  }

  .selected .count {
    color: #4a4a4a;
  }

  .none {
    color: #d6d6d6;
  }

  .at-small {
    font: bold 17px "Liberation Serif", serif;
    fill: #fff;
    text-anchor: middle;
  }

  .scrollbar {
    width: 14px;
    flex-shrink: 0;
    display: flex;
    flex-direction: column;
    padding-bottom: 1px;
    border: 1px solid #c8c8c8;
    border-width: 0 1px;
    background: linear-gradient(90deg, #ececee, #fff 60%, #f5f5f5);
  }

  .track {
    flex: 1;
    display: flex;
    flex-direction: column;
    margin-top: 6px;
    border: 1px solid #c4c4c4;
    border-width: 1px 0;
    border-radius: 7px;
  }

  .thumb {
    border: 1px solid #a8abb0;
    border-radius: 7px;
    background: linear-gradient(90deg, #d4d8df, #eff1f4 60%, #d0d4da);
  }

  .scrollbar button {
    height: 15px;
    display: grid;
    place-items: center;
    border-bottom: 1px solid #ccc;
  }

  .scrollbar svg {
    width: 8px;
    height: 8px;
    fill: #b3b3b3;
  }

  .form {
    flex: 1;
    display: flex;
    justify-content: center;
  }

  .fields {
    width: 480px;
  }

  .fields h3 {
    font-size: 13px;
    line-height: 20px;
    font-weight: bold;
  }

  .fields p {
    margin-bottom: 2px;
    line-height: 20px;
    color: #5d6670;
  }

  .box {
    height: 70px;
    border: 1px solid #b9b9b9;
    list-style: none;
  }

  .box.clipped {
    height: 17px;
    border-top: 0;
  }

  .box li {
    display: flex;
    align-items: center;
    gap: 3px;
    padding: 0 5px;
    line-height: 22px;
  }

  .plus-minus {
    display: flex;
    gap: 5px;
    padding: 5px 2px 10px;
  }

  .plus-minus button {
    width: 30px;
    height: 18px;
    display: grid;
    place-items: center;
    padding-bottom: 2px;
    border: 1px solid #b5b5b5;
    border-radius: 2px;
    background: linear-gradient(#fff, #efefef);
  }

  .plus-minus button:disabled {
    border-color: #dedede;
    background: #fafafa;
  }

  .plus-minus svg {
    width: 10px;
    height: 10px;
    stroke: #5c5c5c;
    stroke-width: 2;
  }

  .modal footer {
    height: 50px;
    flex-shrink: 0;
    display: flex;
    justify-content: flex-end;
    gap: 20px;
    padding: 9px 23px 0;
    background: #e6eaf2;
    border-top: 1px solid #8a8a8a;
  }

  .modal footer button {
    width: 100px;
    height: 26px;
    border: 1px solid #a3a6ab;
    border-radius: 3px;
    background: linear-gradient(#eceef3, #d9dce3);
    color: #3f3f3f;
    font-weight: bold;
  }

  .modal footer button:disabled {
    border-color: #c6c9cf;
    background: #e1e4eb;
    color: #9a9a9a;
  }

  /* Dock */
  .shelf {
    position: relative;
    height: 73px;
    flex-shrink: 0;
    display: flex;
    justify-content: center;
    padding: 2px 0 0 3px;
  }

  .dock {
    display: flex;
    padding: 0 14px;
    border-radius: 14px 14px 0 0;
    background-color: #666;
    background-image: radial-gradient(circle, #5c5c5c 1px, transparent 2px), radial-gradient(circle, #5c5c5c 1px, transparent 2px);
    background-size: 18px 18px;
    background-position: 0 0, 9px 9px;
  }

  .dock-item {
    width: 54px;
    height: 71px;
    display: flex;
    flex-direction: column;
    align-items: center;
    justify-content: space-between;
    padding-top: 8px;
  }

  .dock-item svg {
    width: 48px;
    height: 48px;
    overflow: visible;
  }

  .dock-item.running::after {
    content: "";
    width: 12px;
    height: 3px;
    background: #fff;
    box-shadow: 0 0 5px 2px #8fc8e6;
  }

  .dock-divider {
    width: 27px;
  }

  .prompt {
    font: bold 12px "Liberation Mono", monospace;
    fill: #fff;
  }

  .desktop-file {
    position: absolute;
    top: 0;
    right: 35px;
    display: flex;
    flex-direction: column;
    align-items: center;
    gap: 9px;
    color: #fff;
    font-size: 12px;
    font-weight: bold;
    line-height: 16px;
    text-decoration: none;
  }

  .desktop-file text {
    font: 34px "Liberation Serif", serif;
    fill: #26276f;
    text-anchor: middle;
  }
</style>
